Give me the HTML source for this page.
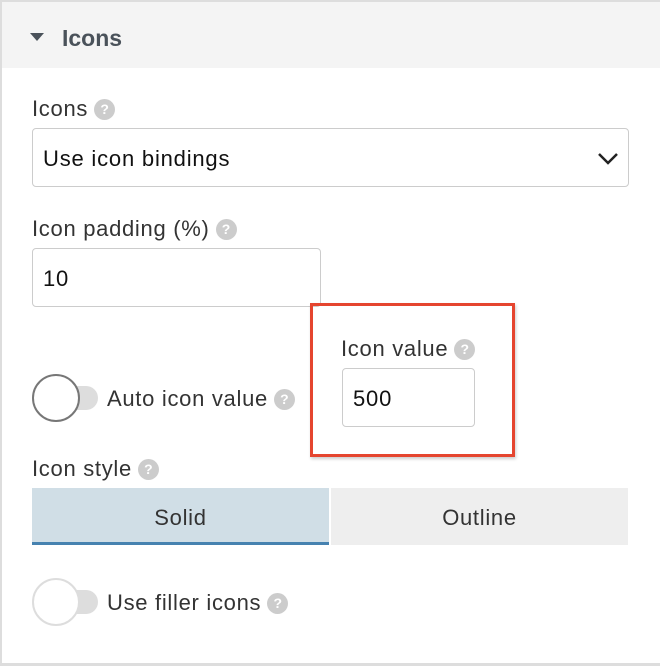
<!DOCTYPE html>
<html><head><style>
*{box-sizing:border-box;margin:0;padding:0}
body{width:660px;height:666px;background:#fff;font-family:"Liberation Sans",sans-serif;color:#333;position:relative;overflow:hidden}
.a{position:absolute}
.lbl{font-size:22px;letter-spacing:0.7px;color:#333;white-space:nowrap;line-height:24px}
.q{display:inline-block;width:21px;height:21px;border-radius:50%;background:#ccc;color:#fff;font-size:14px;font-weight:bold;text-align:center;line-height:21px;vertical-align:2px;margin-left:6px;letter-spacing:0}
.box{border:1.5px solid #ccc;border-radius:4px;background:#fff;font-size:22px;letter-spacing:0.8px;color:#111;padding-left:10px;display:flex;align-items:center;padding-top:2px}
</style></head><body>
<div class="a" style="left:0;top:0;width:660px;height:2px;background:#ddd"></div>
<div class="a" style="left:0;top:0;width:2px;height:666px;background:#ddd"></div>
<div class="a" style="left:0;top:663px;width:660px;height:3px;background:#ddd"></div>
<div class="a" style="left:2px;top:2px;width:658px;height:66px;background:#f4f4f4"></div>
<div class="a" style="left:30px;top:33px;width:0;height:0;border-left:7px solid transparent;border-right:7px solid transparent;border-top:8px solid #4a525a"></div>
<div class="a" style="left:62px;top:25px;font-size:23px;font-weight:bold;color:#4a525a">Icons</div>

<div class="a lbl" style="left:32px;top:97px">Icons<span class="q">?</span></div>
<div class="a box" style="left:32px;top:128px;width:597px;height:59px">Use icon bindings</div>
<svg class="a" style="left:597px;top:152px" width="22" height="14" viewBox="0 0 22 14"><path d="M2 2 L11 11 L20 2" fill="none" stroke="#222" stroke-width="2.5"/></svg>

<div class="a lbl" style="left:32px;top:217px">Icon padding (%)<span class="q">?</span></div>
<div class="a box" style="left:32px;top:248px;width:289px;height:59px">10</div>

<div class="a" style="left:310px;top:303px;width:205px;height:154px;border:3px solid #e5452f;box-shadow:1px 2px 3px rgba(0,0,0,.2)"></div>
<div class="a lbl" style="left:341px;top:337px">Icon value<span class="q">?</span></div>
<div class="a box" style="left:342px;top:368px;width:133px;height:59px">500</div>

<div class="a" style="left:58px;top:386px;width:40px;height:24px;border-radius:12px;background:#ddd"></div>
<div class="a" style="left:32px;top:374px;width:48px;height:48px;border-radius:50%;background:#fff;border:2px solid #777"></div>
<div class="a lbl" style="left:107px;top:387px">Auto icon value<span class="q">?</span></div>

<div class="a lbl" style="left:32px;top:457px">Icon style<span class="q">?</span></div>
<div class="a" style="left:32px;top:488px;width:297px;height:57px;background:#d0dee6;border-bottom:3px solid #4682b0;font-size:22px;letter-spacing:0.7px;text-align:center;line-height:60px">Solid</div>
<div class="a" style="left:331px;top:488px;width:297px;height:57px;background:#eee;font-size:22px;letter-spacing:0.7px;text-align:center;line-height:60px">Outline</div>

<div class="a" style="left:58px;top:590px;width:40px;height:24px;border-radius:12px;background:#ddd"></div>
<div class="a" style="left:32px;top:578px;width:48px;height:48px;border-radius:50%;background:#fff;border:2px solid #ddd"></div>
<div class="a lbl" style="left:107px;top:591px">Use filler icons<span class="q">?</span></div>
</body></html>
